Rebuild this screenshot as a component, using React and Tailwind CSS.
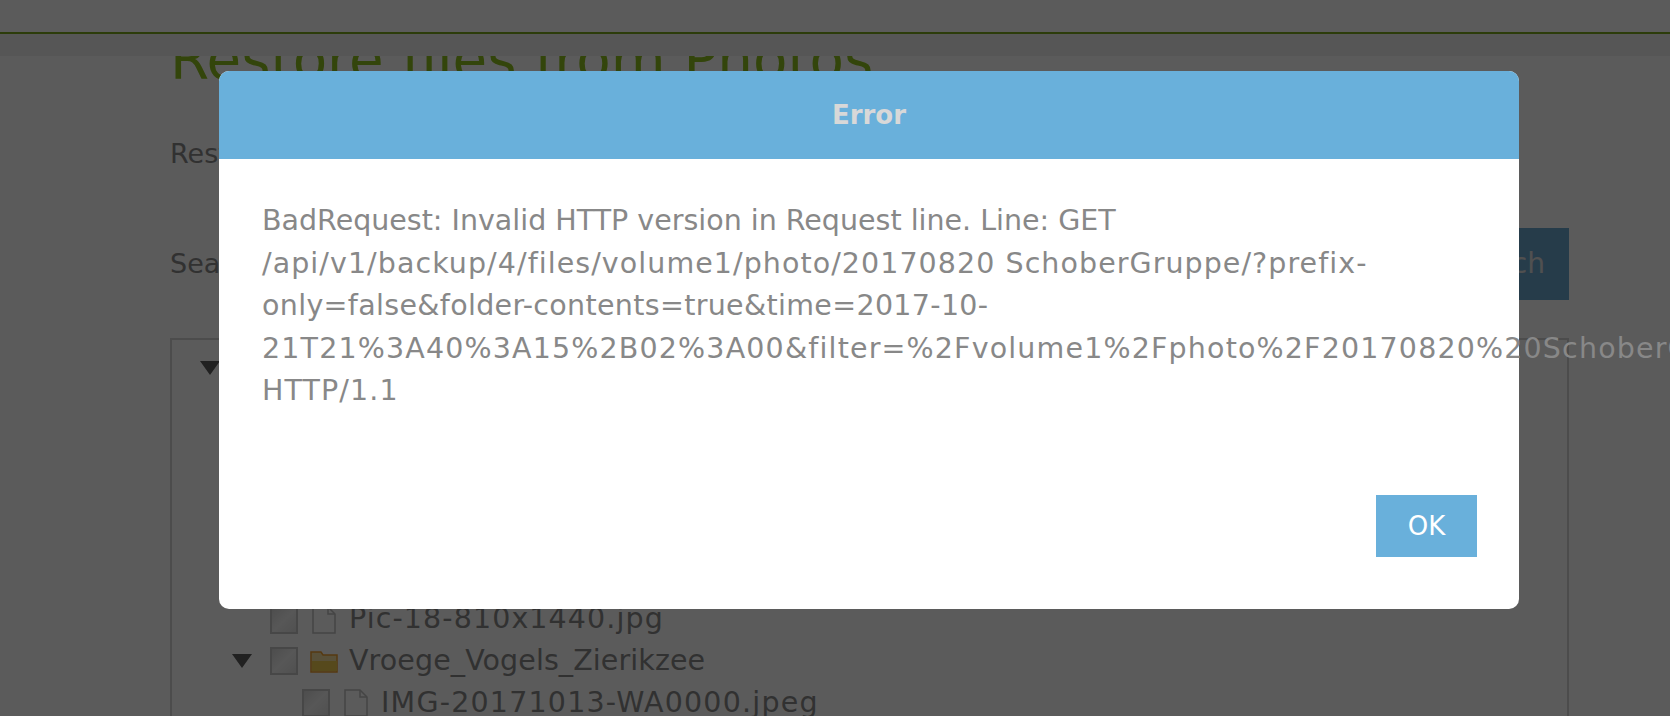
const TREE_ROWS = [
  { name: 'Pic-18-810x1440.jpg', depth: 1, type: 'file', track: 'tracking-[1.1px]' },
  { name: 'Vroege_Vogels_Zierikzee', depth: 1, type: 'folder', open: true, track: 'tracking-[0.1px]' },
  { name: 'IMG-20171013-WA0000.jpeg', depth: 2, type: 'file', track: 'tracking-[1.2px]' },
];

const MESSAGE_LINES = [
  { text: 'BadRequest: Invalid HTTP version in Request line. Line: GET', track: 'tracking-normal' },
  { text: '/api/v1/backup/4/files/volume1/photo/20170820 SchoberGruppe/?prefix-', track: 'tracking-[1.06px]' },
  { text: 'only=false&folder-contents=true&time=2017-10-', track: 'tracking-[0.33px]' },
  { text: '21T21%3A40%3A15%2B02%3A00&filter=%2Fvolume1%2Fphoto%2F20170820%20SchoberGruppe', track: 'tracking-[1.16px]' },
  { text: 'HTTP/1.1', track: 'tracking-[1.1px]' },
];

function Caret() {
  return (
    <svg width="20" height="14" viewBox="0 0 20 14" className="shrink-0">
      <path d="M0 0h20L10 14z" fill="#5c5c5c" />
    </svg>
  );
}

function CheckBox() {
  return <span className="w-[28px] h-[28px] shrink-0 border-2 border-[#c8c8c8] bg-gradient-to-br from-[#d8d8d8] via-[#f4f4f4] to-[#e0e0e0]" />;
}

function FileIcon() {
  return (
    <svg width="24" height="28" viewBox="0 0 24 28" className="shrink-0" fill="none" stroke="#c0c0c0" strokeWidth="1.5">
      <path d="M1 1h15l7 7v19H1z" />
      <path d="M16 1v7h7" />
    </svg>
  );
}

function FolderIcon() {
  return (
    <svg width="28" height="24" viewBox="0 0 28 24" className="shrink-0">
      <path d="M1 3h10l2 3h14v17H1z" fill="#f6e0a0" stroke="#f0a030" strokeWidth="1.5" />
      <path d="M2 12h25v10H2z" fill="#f0cc50" />
    </svg>
  );
}

function TreeRow({ row }) {
  return (
    <div className={`flex items-center h-[41.6px] ${row.depth === 2 ? 'pl-[130px]' : 'pl-[98px]'}`}>
      <span className="w-[20px] -ml-[38px] mr-[18px] flex">{row.open && <Caret />}</span>
      <CheckBox />
      <span className="ml-[12px] flex w-[28px] justify-center">{row.type === 'file' ? <FileIcon /> : <FolderIcon />}</span>
      <span className={`ml-[11px] text-[28.5px] text-[#8a8a8a] whitespace-nowrap ${row.track}`}>{row.name}</span>
    </div>
  );
}

export default function App() {
  return (
    <div className="relative w-[1670px] h-[716px] overflow-hidden bg-white font-['DejaVu_Sans',sans-serif]">
      {/* top bar */}
      <div className="relative z-10 h-[56px] bg-[#f2f2f2]">
        <div className="h-[32px] bg-[#fefefe] border-b-2 border-[#7da81e] box-content" />
      </div>

      {/* page behind the dialog */}
      <div className="pl-[170px] pr-[101px] -mt-[32px]">
        <h1 className="text-[56.3px] leading-[72px] text-[#90c020] whitespace-nowrap">Restore files from Photos</h1>
        <p className="mt-[38px] text-[27px] leading-[40px] text-[#8a8a8a]">Restore files</p>
        <div className="mt-[54px] flex items-center h-[72px] justify-between">
          <span className="text-[27px] text-[#8a8a8a]">Search</span>
          <span className="w-[140px] h-[72px] bg-[#6aa8d0] flex items-center justify-end pr-[24px] text-[28px] text-[#e0e0e0]">Search</span>
        </div>
        <div className="mt-[38px] h-[500px] border-2 border-[#d4d4d4] pt-[21px]">
          <div className="pl-[28px]"><Caret /></div>
          <div className="mt-[224px]">
            {TREE_ROWS.map((row) => <TreeRow key={row.name} row={row} />)}
          </div>
        </div>
      </div>

      {/* dim layer and dialog */}
      <div className="absolute inset-0 z-20 bg-black/[0.645] pt-[71px] pl-[219px]">
        <div className="w-[1300px] h-[538px] rounded-[10px] bg-white flex flex-col overflow-visible">
          <div className="h-[88px] shrink-0 rounded-t-[10px] bg-[#69b0db] pt-[1px] flex items-center justify-center">
            <span className="text-[26px] font-bold text-[#d8d8d8]">Error</span>
          </div>
          <div className="pl-[43px] pt-[41px] text-[28.5px] leading-[42.6px] text-[#888888] whitespace-nowrap">
            {MESSAGE_LINES.map((line) => <div key={line.text} className={line.track}>{line.text}</div>)}
          </div>
          <div className="mt-auto flex justify-end pr-[42px] pb-[52px]">
            <button className="w-[101px] h-[62px] bg-[#69b0db] text-white text-[26px]">OK</button>
          </div>
        </div>
      </div>
    </div>
  );
}
